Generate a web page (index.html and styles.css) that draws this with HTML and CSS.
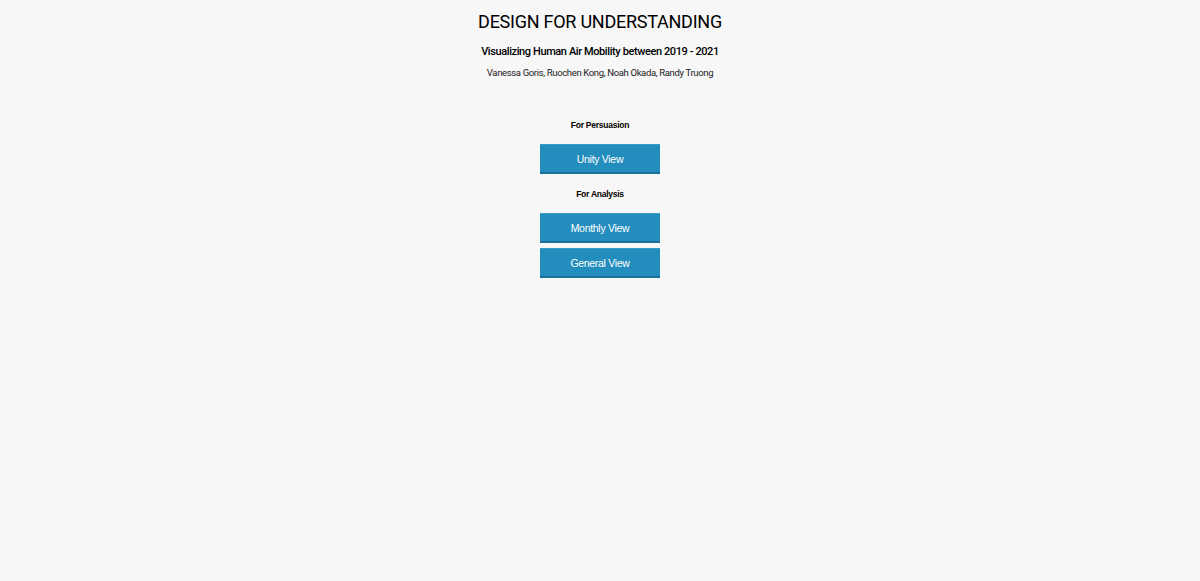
FILE: index.html
```html
<!DOCTYPE html>
<html>
<head>
<meta charset="utf-8">
<link rel="stylesheet" href="styles.css">
</head>
<body>
<main class="page">
  <h1 class="title">DESIGN FOR UNDERSTANDING</h1>
  <h2 class="subtitle">Visualizing Human Air Mobility between 2019 - 2021</h2>
  <p class="authors">Vanessa Goris, Ruochen Kong, Noah Okada, Randy Truong</p>
  <section class="group first">
    <h3 class="label">For Persuasion</h3>
    <button class="btn">Unity View</button>
  </section>
  <section class="group">
    <h3 class="label">For Analysis</h3>
    <button class="btn">Monthly View</button>
    <button class="btn">General View</button>
  </section>
</main>
</body>
</html>
```
FILE: styles.css
```css
html, body {
  margin: 0;
  padding: 0;
  background: #f7f7f7;
}
body {
  font-family: Roboto, "Liberation Sans", sans-serif;
  color: #000;
}
.page {
  display: flex;
  flex-direction: column;
  align-items: center;
  padding-top: 11px;
}
.title {
  margin: 0;
  font-size: 18px;
  font-weight: 400;
  line-height: 22px;
  letter-spacing: -0.25px;
}
.subtitle {
  margin: 12px 0 0;
  font-size: 11px;
  font-weight: 500;
  line-height: 14px;
  letter-spacing: -0.4px;
}
.authors {
  margin: 8px 0 0;
  font-size: 9.5px;
  line-height: 12px;
  letter-spacing: -0.35px;
  color: #222;
}
.group {
  display: flex;
  flex-direction: column;
  align-items: center;
}
.group.first {
  margin-top: 40px;
}
.label {
  margin: 0 0 13px;
  font-family: "Liberation Sans", Arial, sans-serif;
  font-size: 8.5px;
  font-weight: 700;
  line-height: 12px;
  letter-spacing: -0.25px;
}
.group + .group .label {
  margin-top: 9px;
}
.btn {
  display: block;
  box-sizing: border-box;
  width: 120px;
  height: 30px;
  margin: 0 0 5px;
  padding: 0;
  background: #238dbd;
  border: none;
  border-top: 1px solid #3b9ac6;
  border-bottom: 2px solid #1b6f99;
  color: #fff;
  font-family: "Liberation Sans", Arial, sans-serif;
  font-size: 10.5px;
  letter-spacing: -0.3px;
  cursor: pointer;
}
```
